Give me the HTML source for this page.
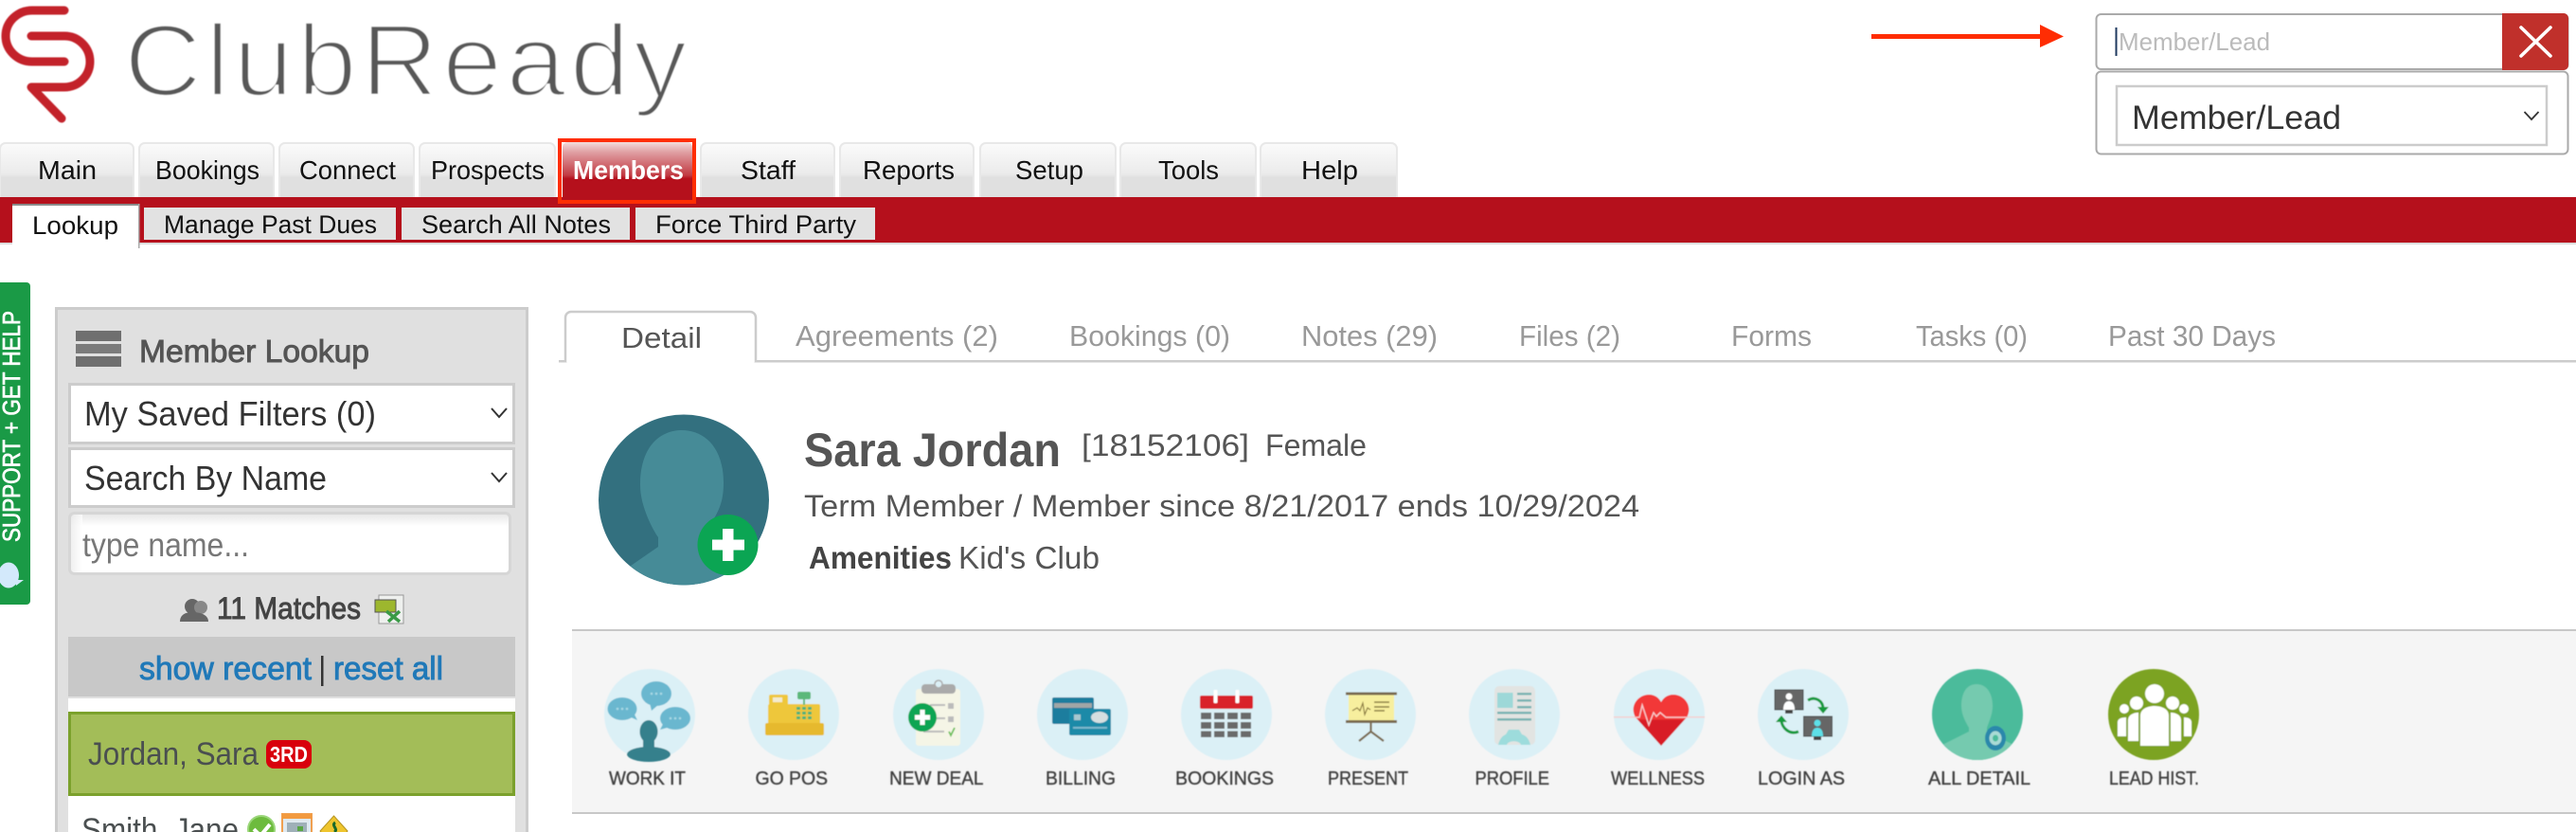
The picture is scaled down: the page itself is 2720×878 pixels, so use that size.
<!DOCTYPE html>
<html lang="en"><head><meta charset="utf-8"><title>ClubReady Member Lookup</title>
<style>
html,body{margin:0;padding:0;background:#fff;width:2720px;height:878px;overflow:hidden}
svg{display:block}
text{font-family:"Liberation Sans",Arial,sans-serif}
.tab{font-size:28px;fill:#111}
.sub{font-size:27px;fill:#111}
.pt{font-size:31px;fill:#999}
.lbl{font-size:20px;fill:#3f3f3f;stroke:#3f3f3f;stroke-width:.35px}
</style></head><body>
<svg width="2720" height="878" viewBox="0 0 2720 878" xmlns="http://www.w3.org/2000/svg">
<defs>
<linearGradient id="tg" x1="0" y1="0" x2="0" y2="1"><stop offset="0" stop-color="#fbfbfb"/><stop offset=".46" stop-color="#ebebeb"/><stop offset=".52" stop-color="#e0e0e0"/><stop offset="1" stop-color="#e0e0e0"/></linearGradient>
<linearGradient id="rg" x1="0" y1="0" x2="0" y2="1"><stop offset="0" stop-color="#f3dcdc"/><stop offset=".15" stop-color="#e0a0a4"/><stop offset=".5" stop-color="#c23a42"/><stop offset=".55" stop-color="#b5101c"/><stop offset="1" stop-color="#b5101c"/></linearGradient>
<linearGradient id="hg" x1="0" y1="0" x2="0" y2="1"><stop offset="0" stop-color="#f23838"/><stop offset=".48" stop-color="#f23838"/><stop offset=".5" stop-color="#d81f26"/><stop offset="1" stop-color="#d81f26"/></linearGradient>
<linearGradient id="ig" x1="0" y1="0" x2="0" y2="1"><stop offset="0" stop-color="#e6e6e6"/><stop offset="1" stop-color="#fff"/></linearGradient>
<linearGradient id="ih" x1="0" y1="0" x2="1" y2="0"><stop offset="0" stop-color="#e8e8e8"/><stop offset="1" stop-color="#fff"/></linearGradient>
<clipPath id="av"><circle cx="722" cy="527.5" r="90"/></clipPath>
<clipPath id="ad"><circle cx="2088" cy="754" r="48"/></clipPath>
<clipPath id="frame"><rect x="0" y="0" width="2720" height="878"/></clipPath>
<filter id="b2" x="-5%" y="-5%" width="110%" height="110%"><feGaussianBlur stdDeviation=".55"/></filter>
</defs>

<!-- Logo -->
<g filter="url(#b2)">
<path d="M68 11H34A28 27 0 0 0 34 65H68M33 38H68A27 27 0 0 1 68 92H33L65 125" fill="none" stroke="#c3202a" stroke-width="9" stroke-linecap="round" stroke-linejoin="round"/>
<text transform="translate(131,101) scale(1.05,1)" x="0" y="0" font-size="108" letter-spacing="4" fill="#585858" stroke="#fff" stroke-width="3.6">ClubReady</text>
</g>

<!-- Main tabs -->
<g stroke="#e8e8e8" stroke-width="2" fill="url(#tg)">
<rect x="0" y="151" width="141" height="70" rx="6"/>
<rect x="147" y="151" width="142" height="70" rx="6"/>
<rect x="295" y="151" width="142" height="70" rx="6"/>
<rect x="443" y="151" width="143" height="70" rx="6"/>
<rect x="740" y="151" width="141" height="70" rx="6"/>
<rect x="887" y="151" width="141" height="70" rx="6"/>
<rect x="1035" y="151" width="143" height="70" rx="6"/>
<rect x="1183" y="151" width="143" height="70" rx="6"/>
<rect x="1331" y="151" width="144" height="70" rx="6"/>
</g>
<rect x="594" y="150" width="137" height="70" rx="5" fill="url(#rg)"/>
<rect x="0" y="208" width="2720" height="48" fill="#b5101c"/>
<rect x="0" y="256" width="2720" height="2" fill="#dcdcdc"/>
<rect x="591" y="148" width="142" height="65" fill="none" stroke="#ff2d03" stroke-width="4"/>
<text class="tab" x="40" y="189" textLength="62" lengthAdjust="spacingAndGlyphs">Main</text>
<text class="tab" x="164" y="189" textLength="110" lengthAdjust="spacingAndGlyphs">Bookings</text>
<text class="tab" x="316" y="189" textLength="102" lengthAdjust="spacingAndGlyphs">Connect</text>
<text class="tab" x="455" y="189" textLength="120" lengthAdjust="spacingAndGlyphs">Prospects</text>
<text class="tab" x="605" y="189" textLength="117" lengthAdjust="spacingAndGlyphs" style="fill:#fff;font-weight:bold">Members</text>
<text class="tab" x="782" y="189" textLength="58" lengthAdjust="spacingAndGlyphs">Staff</text>
<text class="tab" x="911" y="189" textLength="97" lengthAdjust="spacingAndGlyphs">Reports</text>
<text class="tab" x="1072" y="189" textLength="72" lengthAdjust="spacingAndGlyphs">Setup</text>
<text class="tab" x="1223" y="189" textLength="64" lengthAdjust="spacingAndGlyphs">Tools</text>
<text class="tab" x="1374" y="189" textLength="60" lengthAdjust="spacingAndGlyphs">Help</text>

<!-- Sub tabs -->
<rect x="13" y="216" width="133" height="46" fill="#fff"/>
<rect x="13" y="215" width="133" height="2" fill="#8a8a8a"/>
<rect x="146" y="215" width="1.5" height="47" fill="#aaa"/>
<rect x="152" y="219" width="266" height="34" fill="#e2e2e2"/>
<rect x="424" y="219" width="241" height="34" fill="#e2e2e2"/>
<rect x="671" y="219" width="253" height="34" fill="#e2e2e2"/>
<text class="sub" x="34" y="247" textLength="91" lengthAdjust="spacingAndGlyphs">Lookup</text>
<text class="sub" x="173" y="246" textLength="225" lengthAdjust="spacingAndGlyphs">Manage Past Dues</text>
<text class="sub" x="445" y="246" textLength="200" lengthAdjust="spacingAndGlyphs">Search All Notes</text>
<text class="sub" x="692" y="246" textLength="212" lengthAdjust="spacingAndGlyphs">Force Third Party</text>

<!-- Arrow -->
<rect x="1976" y="36" width="180" height="5" fill="#ff2d03"/>
<path d="M2154 26L2179 38.5L2154 50Z" fill="#ff2d03"/>

<!-- Top right search -->
<rect x="2213.5" y="15" width="498" height="58" rx="5" fill="#fff" stroke="#aaa" stroke-width="2"/>
<path d="M2642 14H2707a5 5 0 0 1 5 5V69a5 5 0 0 1-5 5H2642Z" fill="#c0302b"/>
<path d="M2662 29L2693 59M2693 29L2662 59" stroke="#fff" stroke-width="3.6" stroke-linecap="round" fill="none"/>
<rect x="2233.5" y="29" width="2" height="30" fill="#1f3a5f"/>
<text x="2237" y="53" font-size="26" fill="#bbb" textLength="160" lengthAdjust="spacingAndGlyphs">Member/Lead</text>
<rect x="2213.5" y="75.5" width="498" height="87" rx="5" fill="#fff" stroke="#aaa" stroke-width="2"/>
<rect x="2235" y="91" width="454" height="62" fill="#fff" stroke="#ccc" stroke-width="2.5"/>
<text x="2251" y="136" font-size="35" fill="#333" textLength="221" lengthAdjust="spacingAndGlyphs">Member/Lead</text>
<path d="M2665.5 118L2673 126L2680.5 118" fill="none" stroke="#333" stroke-width="1.8"/>

<!-- Support tab -->
<path d="M0 298H28a4 4 0 0 1 4 4V634a4 4 0 0 1-4 4H0Z" fill="#1a9a46"/>
<text transform="translate(21,572) rotate(-90)" font-size="26" fill="#fff" stroke="#fff" stroke-width=".7" textLength="244" lengthAdjust="spacingAndGlyphs">SUPPORT + GET HELP</text>
<ellipse cx="9" cy="607" rx="11" ry="13.5" fill="#d3e9fb"/>
<path d="M16 612L25 612L17 618Z" fill="#d3e9fb"/>

<!-- Left panel -->
<rect x="58" y="324" width="500" height="554" fill="#ccc"/>
<rect x="61" y="327" width="494" height="551" fill="#e0e0e0"/>
<rect x="80" y="349" width="48" height="11" fill="#6f6f6f"/>
<rect x="80" y="363" width="48" height="10" fill="#7b7b7b"/>
<rect x="80" y="376" width="48" height="11" fill="#6f6f6f"/>
<text x="147" y="382" font-size="33" fill="#555" stroke="#555" stroke-width=".9" textLength="243" lengthAdjust="spacingAndGlyphs">Member Lookup</text>

<rect x="73.5" y="405.5" width="469" height="62" fill="#fff" stroke="#ccc" stroke-width="3"/>
<text x="89" y="449" font-size="36" fill="#333" textLength="308" lengthAdjust="spacingAndGlyphs">My Saved Filters (0)</text>
<path d="M519 431L527 440L535 431" fill="none" stroke="#333" stroke-width="2"/>
<rect x="73.5" y="473.5" width="469" height="61" fill="#fff" stroke="#ccc" stroke-width="3"/>
<text x="89" y="517" font-size="36" fill="#333" textLength="256" lengthAdjust="spacingAndGlyphs">Search By Name</text>
<path d="M519 499L527 508L535 499" fill="none" stroke="#333" stroke-width="2"/>

<rect x="73.5" y="541.5" width="465" height="64" rx="5" fill="#fff"/>
<rect x="74" y="542" width="464" height="13" fill="url(#ig)"/>
<rect x="74" y="542" width="13" height="63" fill="url(#ih)" opacity=".7"/>
<rect x="73.5" y="541.5" width="465" height="64" rx="5" fill="none" stroke="#d6d6d6" stroke-width="3"/>
<text x="87" y="587" font-size="35" fill="#777" textLength="176" lengthAdjust="spacingAndGlyphs">type name...</text>

<g fill="#666"><circle cx="203" cy="640" r="8"/><circle cx="212" cy="641" r="7" fill="#888"/><path d="M190 656C190 648 197 646 203 646C210 646 220 648 220 656Z"/></g>
<text x="229" y="653" font-size="32" fill="#444" stroke="#444" stroke-width=".9" textLength="152" lengthAdjust="spacingAndGlyphs">11 Matches</text>
<rect x="400" y="628" width="26" height="30" fill="#eef0ee" stroke="#999" stroke-width="1"/>
<rect x="396" y="633" width="22" height="13" fill="#9db72e" stroke="#555" stroke-width="1"/>
<path d="M408 645L422 656M422 645L410 656" stroke="#3a9a46" stroke-width="3.5"/>

<rect x="72" y="672" width="472" height="63" fill="#c8c8c8"/>
<text x="147" y="717" font-size="34" fill="#2079b8" stroke="#2079b8" stroke-width=".9" textLength="182" lengthAdjust="spacingAndGlyphs">show recent</text>
<rect x="339" y="692" width="2.5" height="32" fill="#333"/>
<text x="352" y="717" font-size="34" fill="#2079b8" stroke="#2079b8" stroke-width=".9" textLength="116" lengthAdjust="spacingAndGlyphs">reset all</text>

<rect x="72" y="737" width="472" height="141" fill="#fff"/>
<rect x="73.5" y="752.5" width="469" height="86" fill="#a3bd58" stroke="#7ba12c" stroke-width="3"/>
<text x="93" y="807" font-size="34" fill="#4a4f50" textLength="180" lengthAdjust="spacingAndGlyphs">Jordan, Sara</text>
<rect x="281" y="781" width="48" height="30" rx="8" fill="#d8000c"/>
<text x="285" y="804" font-size="23" font-weight="bold" fill="#fff" textLength="40" lengthAdjust="spacingAndGlyphs">3RD</text>
<g clip-path="url(#frame)">
<text x="86" y="887" font-size="34" fill="#4a4f50" textLength="166" lengthAdjust="spacingAndGlyphs">Smith, Jane</text>
<circle cx="276" cy="875" r="14" fill="#6dbb3d" stroke="#9bd67a" stroke-width="2"/>
<path d="M268 875L275 882L285 870" fill="none" stroke="#fff" stroke-width="4"/>
<rect x="298" y="859" width="31" height="24" fill="#dfe9ef" stroke="#f0a050" stroke-width="2"/>
<rect x="298" y="859" width="31" height="5" fill="#f29a3f"/>
<rect x="303" y="868" width="21" height="10" fill="#9fb0b8"/>
<rect x="314" y="872" width="6" height="5" fill="#5aa644"/>
<path d="M352.5 861L367 877L352.5 893L338 877Z" fill="#efc52e" stroke="#b69520" stroke-width="1"/>
<path d="M354 868C349 871 358 875 353 878" fill="none" stroke="#1a6a2a" stroke-width="3"/>
</g>

<!-- Detail tabs -->
<rect x="590" y="380" width="2130" height="2.5" fill="#ccc"/>
<path d="M597 382V335a6 6 0 0 1 6-6H792a6 6 0 0 1 6 6V382" fill="#fff" stroke="#ccc" stroke-width="2.5"/>
<rect x="598.5" y="378" width="198" height="6" fill="#fff"/>
<text x="656" y="367" font-size="31" fill="#555" textLength="85" lengthAdjust="spacingAndGlyphs">Detail</text>
<text class="pt" x="840" y="365" textLength="214" lengthAdjust="spacingAndGlyphs">Agreements (2)</text>
<text class="pt" x="1129" y="365" textLength="170" lengthAdjust="spacingAndGlyphs">Bookings (0)</text>
<text class="pt" x="1374" y="365" textLength="144" lengthAdjust="spacingAndGlyphs">Notes (29)</text>
<text class="pt" x="1604" y="365" textLength="107" lengthAdjust="spacingAndGlyphs">Files (2)</text>
<text class="pt" x="1828" y="365" textLength="85" lengthAdjust="spacingAndGlyphs">Forms</text>
<text class="pt" x="2023" y="365" textLength="118" lengthAdjust="spacingAndGlyphs">Tasks (0)</text>
<text class="pt" x="2226" y="365" textLength="177" lengthAdjust="spacingAndGlyphs">Past 30 Days</text>

<!-- Avatar -->
<circle cx="722" cy="527.5" r="90" fill="#33707f"/>
<g clip-path="url(#av)"><path d="M720 454C698 454 676 470 676 512C676 535 690 560 695 567V577L640 615V630H800V600L747 577V558C755 545 764 535 764 510C764 470 742 454 720 454Z" fill="#468b97"/></g>
<circle cx="768.5" cy="575" r="32" fill="#0ba553"/>
<path d="M763 558H774.5V569.5H786V580.5H774.5V592H763V580.5H752V569.5H763Z" fill="#fff"/>
<text x="849" y="492" font-size="50" font-weight="bold" fill="#555" textLength="271" lengthAdjust="spacingAndGlyphs">Sara Jordan</text>
<text x="1142" y="481" font-size="32" fill="#555" textLength="177" lengthAdjust="spacingAndGlyphs">[18152106]</text>
<text x="1336" y="481" font-size="32" fill="#555" textLength="107" lengthAdjust="spacingAndGlyphs">Female</text>
<text x="849" y="545" font-size="32" fill="#555" textLength="882" lengthAdjust="spacingAndGlyphs">Term Member / Member since 8/21/2017 ends 10/29/2024</text>
<text x="854" y="600" font-size="33" font-weight="bold" fill="#444" textLength="151" lengthAdjust="spacingAndGlyphs">Amenities</text>
<text x="1012" y="600" font-size="33" fill="#555" textLength="149" lengthAdjust="spacingAndGlyphs">Kid's Club</text>

<!-- Icon bar -->
<rect x="604" y="664" width="2116" height="195" fill="#f5f5f5"/>
<rect x="604" y="664" width="2116" height="2" fill="#c8c8c8"/>
<rect x="604" y="857" width="2116" height="2" fill="#c8c8c8"/>
<g filter="url(#b2)">
<g fill="#dbf0f6">
<circle cx="686" cy="754" r="48"/><circle cx="838" cy="754" r="48"/><circle cx="991" cy="754" r="48"/><circle cx="1143" cy="754" r="48"/><circle cx="1295" cy="754" r="48"/><circle cx="1447" cy="754" r="48"/><circle cx="1599" cy="754" r="48"/><circle cx="1752" cy="754" r="48"/><circle cx="1904" cy="754" r="48"/>
</g>
<!-- work it -->
<g fill="#6bb7cf"><ellipse cx="657" cy="748" rx="15.5" ry="12"/><path d="M664 756L673 760L668 750Z"/><ellipse cx="693" cy="732" rx="16" ry="13"/><path d="M686 742L688 750L696 743Z"/><ellipse cx="713" cy="758" rx="16" ry="12"/><path d="M700 764L697 770L708 767Z"/></g>
<g fill="#a8d8e4"><circle cx="652" cy="748" r="1.3"/><circle cx="657" cy="748" r="1.3"/><circle cx="662" cy="748" r="1.3"/><circle cx="688" cy="732" r="1.3"/><circle cx="693" cy="732" r="1.3"/><circle cx="698" cy="732" r="1.3"/><circle cx="708" cy="758" r="1.3"/><circle cx="713" cy="758" r="1.3"/><circle cx="718" cy="758" r="1.3"/></g>
<g fill="#35808c"><ellipse cx="685" cy="772" rx="9.5" ry="12"/><rect x="679" y="780" width="12" height="12"/><ellipse cx="685" cy="796" rx="23" ry="8"/></g>
<!-- pos -->
<rect x="812" y="733" width="20" height="14" rx="2" fill="#eec73a"/><rect x="816" y="736" width="10" height="5" fill="#f3ecd0"/>
<rect x="811" y="743" width="55" height="22" rx="2" fill="#eec73a"/>
<rect x="808" y="763" width="62" height="13" rx="2" fill="#e6b92e"/>
<rect x="848" y="738" width="2" height="6" fill="#5cb87a"/><rect x="842" y="730" width="14" height="8" rx="2" fill="#5cb87a"/>
<g fill="#4eb07a"><rect x="841" y="746" width="4" height="3"/><rect x="847" y="746" width="4" height="3"/><rect x="853" y="746" width="4" height="3"/><rect x="841" y="751" width="4" height="3"/><rect x="847" y="751" width="4" height="3"/><rect x="853" y="751" width="4" height="3"/><rect x="841" y="756" width="4" height="3"/><rect x="847" y="756" width="4" height="3"/><rect x="853" y="756" width="4" height="3"/></g>
<!-- new deal -->
<rect x="967" y="727" width="47" height="60" rx="3" fill="#f5f5e6"/>
<rect x="973" y="722" width="36" height="10" rx="4" fill="#aaa"/><circle cx="991" cy="722" r="4" fill="#dbf0f6" stroke="#aaa" stroke-width="1.5"/>
<g fill="#bbb"><rect x="982" y="743" width="16" height="2"/><rect x="982" y="757" width="16" height="2"/><rect x="975" y="771" width="22" height="2"/><rect x="1001" y="742" width="6" height="6"/><rect x="1001" y="756" width="6" height="6"/></g>
<path d="M1002 772L1004 776L1008 768" fill="none" stroke="#6cc05a" stroke-width="1.8"/>
<circle cx="974" cy="757" r="15" fill="#0ba553"/><path d="M971.5 749H976.5V754.5H982V759.5H976.5V765H971.5V759.5H966V754.5H971.5Z" fill="#fff"/>
<!-- billing -->
<rect x="1111" y="736" width="44" height="28" rx="2" fill="#1d7d9e"/><rect x="1113" y="742" width="40" height="5" fill="#a0a6a6"/>
<rect x="1129" y="748" width="44" height="28" rx="2" fill="#1f8aa8"/><rect x="1134" y="754" width="7" height="6" fill="#a8c8d0"/><ellipse cx="1161" cy="757" rx="9" ry="6" fill="#d5dfe0"/><rect x="1133" y="767" width="36" height="2" fill="#7cb8cc"/>
<!-- bookings -->
<rect x="1267" y="734" width="56" height="14" rx="2" fill="#d9232b"/><rect x="1281.5" y="728" width="4" height="14" rx="1" fill="#fff"/><rect x="1304.5" y="728" width="4" height="14" rx="1" fill="#fff"/>
<g fill="#6a6a6a"><rect x="1268" y="752" width="11" height="7"/><rect x="1282" y="752" width="11" height="7"/><rect x="1296" y="752" width="11" height="7"/><rect x="1310" y="752" width="11" height="7"/><rect x="1268" y="762" width="11" height="7"/><rect x="1282" y="762" width="11" height="7"/><rect x="1296" y="762" width="11" height="7"/><rect x="1310" y="762" width="11" height="7"/><rect x="1268" y="771.5" width="11" height="6.5"/><rect x="1282" y="771.5" width="11" height="6.5"/><rect x="1296" y="771.5" width="11" height="6.5"/><rect x="1310" y="771.5" width="11" height="6.5"/></g>
<!-- present -->
<rect x="1424" y="733" width="48" height="27" fill="#f7ef9e"/>
<rect x="1421" y="730.5" width="54" height="3" fill="#7a6a50"/><rect x="1421" y="760" width="54" height="3" fill="#7a6a50"/>
<path d="M1447.5 763V772L1435 782M1447.5 772L1461 782" fill="none" stroke="#7a6a50" stroke-width="2.2"/>
<path d="M1428 750L1433 747L1436 750L1439 742L1441 754L1444 747L1447 749" fill="none" stroke="#8a7a40" stroke-width="1.2"/>
<path d="M1451 741H1467M1451 746H1467M1451 750H1462" stroke="#8a7a40" stroke-width="1.5" fill="none"/>
<!-- profile -->
<rect x="1578" y="724" width="43" height="62" rx="5" fill="#e2e4e2"/>
<rect x="1581" y="731" width="16.5" height="16" fill="#9dd8d8"/>
<g fill="#7ab4b4"><rect x="1602" y="731" width="15" height="2.5"/><rect x="1602" y="738" width="15" height="2.5"/><rect x="1602" y="745" width="15" height="2.5"/><rect x="1581" y="751" width="36" height="2.5"/><rect x="1581" y="758" width="36" height="2.5"/></g>
<path d="M1582 786C1584 778 1588 776 1590 775L1593 770H1604L1607 775C1610 776 1614 778 1616 786H1606C1605 781 1592 781 1591 786Z" fill="#9ddcdc"/>
<!-- wellness -->
<rect x="1704" y="756" width="96" height="1.5" fill="#f4cfcf"/>
<path d="M1754 787L1727 757C1720 745 1730 733 1741 733C1748 733 1752 737 1754 741C1756 737 1760 733 1767 733C1778 733 1788 745 1781 757Z" fill="url(#hg)"/>
<path d="M1727 757L1731 757L1734 744L1741 765L1746 752L1749 756L1753 752L1759 757H1781" fill="none" stroke="#f8c8c8" stroke-width="1.4"/>
<!-- login as -->
<rect x="1874" y="728" width="30" height="21" fill="#666" stroke="#444" stroke-width="1"/><rect x="1885" y="749" width="8" height="4" fill="#444"/><circle cx="1889" cy="735" r="3.5" fill="#fff"/><path d="M1883 749C1883 742 1886 740 1889 740C1892 740 1895 742 1895 749Z" fill="#fff"/>
<rect x="1904.5" y="756" width="30" height="21" fill="#666" stroke="#444" stroke-width="1"/><rect x="1915" y="777" width="8" height="4" fill="#444"/><circle cx="1919" cy="763" r="3.5" fill="#5de0e8"/><path d="M1913 777C1913 770 1916 768 1919 768C1922 768 1925 770 1925 777Z" fill="#5de0e8"/>
<path d="M1909 739C1917 734 1925 740 1925 748" fill="none" stroke="#129a3e" stroke-width="3"/><path d="M1919 746L1931 746L1925 753Z" fill="#129a3e"/>
<path d="M1899 772C1890 776 1881 768 1881 760" fill="none" stroke="#129a3e" stroke-width="3"/><path d="M1875 762L1887 762L1881 755Z" fill="#129a3e"/>
<!-- all detail -->
<circle cx="2088" cy="754" r="48" fill="#4bbb9b"/>
<g clip-path="url(#ad)"><path d="M2087 722C2076 722 2071 732 2071 745C2071 756 2078 766 2079 768V772L2047 788V806H2130V788L2098 772V768C2100 762 2104 754 2104 745C2104 732 2098 722 2087 722Z" fill="#74caaf"/></g>
<ellipse cx="2107" cy="779" rx="11" ry="13" fill="#2a88ab"/><ellipse cx="2107" cy="779" rx="6.5" ry="7.5" fill="#a9dbd5"/><ellipse cx="2107" cy="779" rx="3" ry="3.5" fill="#4bbb9b"/>
<!-- lead hist -->
<circle cx="2274" cy="754" r="48" fill="#7ca322"/>
<g fill="#fff"><circle cx="2275" cy="732" r="10"/><circle cx="2256" cy="742" r="7"/><circle cx="2294" cy="742" r="7"/><circle cx="2243" cy="748" r="5"/><circle cx="2306" cy="748" r="5"/>
<path d="M2260 787V755C2260 748 2268 745 2275 745C2282 745 2290 748 2290 755V787Z"/>
<path d="M2247 782V760C2247 755 2252 752 2258 752V782Z"/><path d="M2292 782V752C2298 752 2303 755 2303 760V782Z"/>
<path d="M2236 777V762C2236 759 2239 757 2245 757V777Z"/><path d="M2306 777V757C2311 757 2314 759 2314 762V777Z"/></g>
</g>
<g filter="url(#b2)">
<text class="lbl" x="643" y="828" textLength="81" lengthAdjust="spacingAndGlyphs">WORK IT</text>
<text class="lbl" x="797.5" y="828" textLength="76.5" lengthAdjust="spacingAndGlyphs">GO POS</text>
<text class="lbl" x="939" y="828" textLength="99.5" lengthAdjust="spacingAndGlyphs">NEW DEAL</text>
<text class="lbl" x="1104" y="828" textLength="74" lengthAdjust="spacingAndGlyphs">BILLING</text>
<text class="lbl" x="1241" y="828" textLength="104" lengthAdjust="spacingAndGlyphs">BOOKINGS</text>
<text class="lbl" x="1402" y="828" textLength="85" lengthAdjust="spacingAndGlyphs">PRESENT</text>
<text class="lbl" x="1557.5" y="828" textLength="78.5" lengthAdjust="spacingAndGlyphs">PROFILE</text>
<text class="lbl" x="1701" y="828" textLength="99" lengthAdjust="spacingAndGlyphs">WELLNESS</text>
<text class="lbl" x="1856" y="828" textLength="92" lengthAdjust="spacingAndGlyphs">LOGIN AS</text>
<text class="lbl" x="2036" y="828" textLength="108" lengthAdjust="spacingAndGlyphs">ALL DETAIL</text>
<text class="lbl" x="2227" y="828" textLength="95" lengthAdjust="spacingAndGlyphs">LEAD HIST.</text>
</g>
</svg>
</body></html>
